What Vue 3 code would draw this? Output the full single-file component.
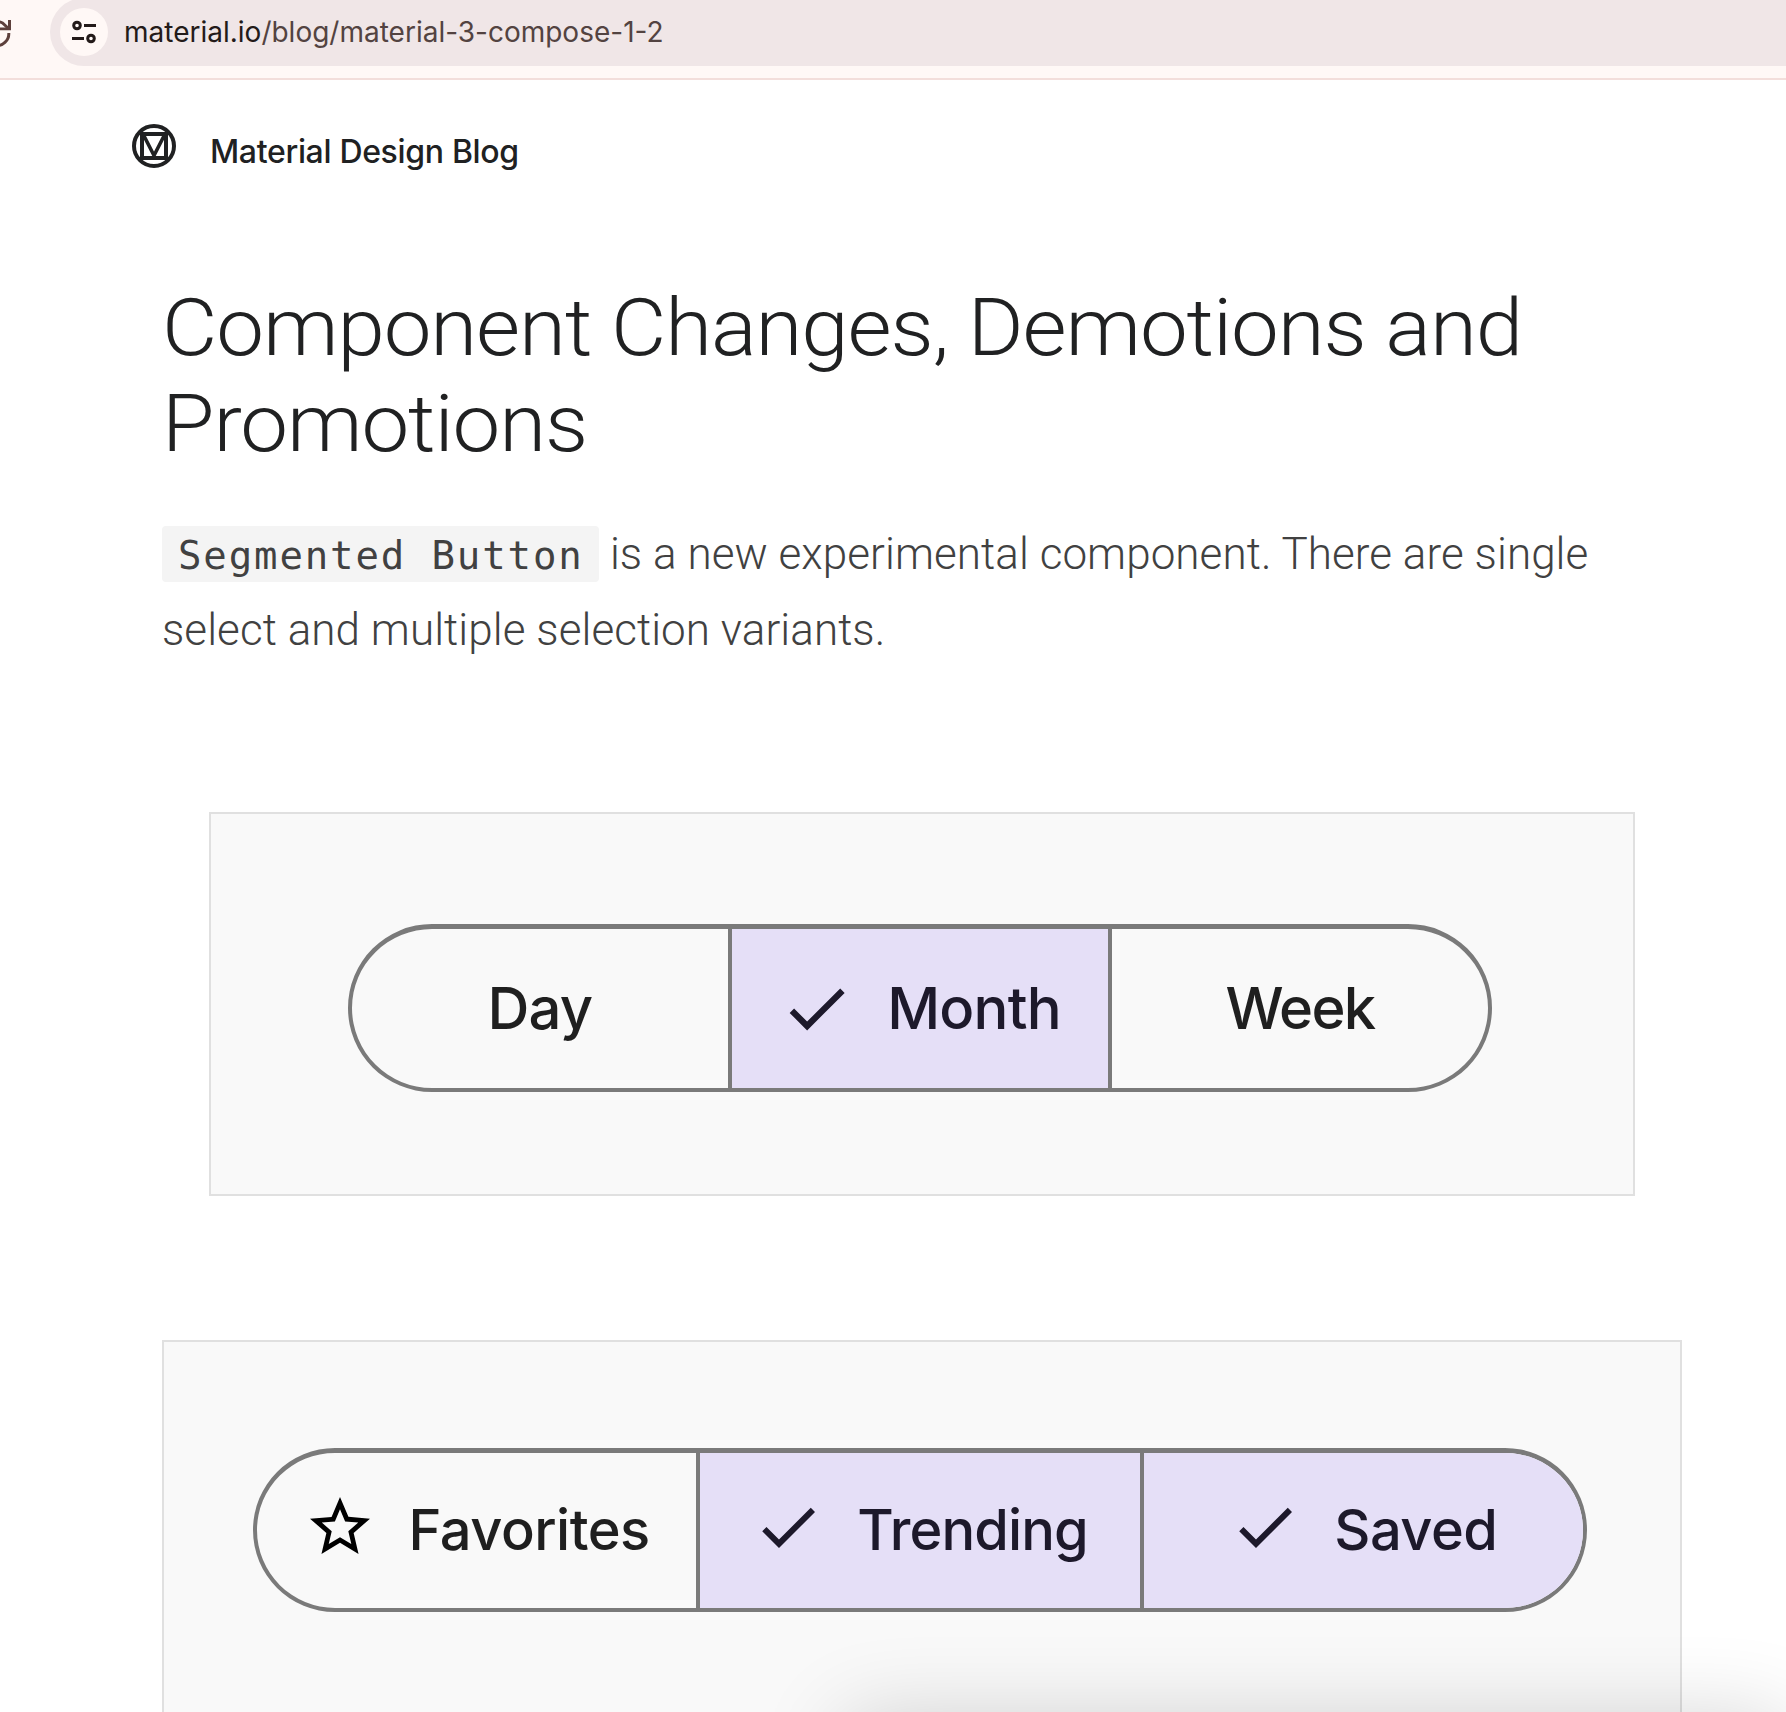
<template>
  <div class="page">
    <div class="toolbar">
      <svg class="reload" width="32" height="32" viewBox="0 0 32 32">
        <path d="M29.8 17A12 12 0 1 1 23.5 7L29.5 12.5" fill="none" stroke="#5d403c" stroke-width="3" />
        <path d="M32 4V14.2H21V11.4H29V4Z" fill="#5d403c" />
      </svg>
      <div class="omnibox">
        <span class="site-info">
          <svg width="24" height="24" viewBox="0 0 24 24" fill="none" stroke="#231a19" stroke-width="3">
            <circle cx="5" cy="5.5" r="3.3" />
            <path d="M12 5.5H24M0 18.5H12" />
            <circle cx="19" cy="18.5" r="3.3" />
          </svg>
        </span>
        <span class="url"><span class="host">material.io</span>/blog/material-3-compose-1-2</span>
      </div>
    </div>

    <header class="site-header">
      <svg class="logo" width="44" height="44" viewBox="0 0 44 44" fill="none" stroke="#202122" stroke-width="4">
        <circle cx="22" cy="22" r="20" />
        <path d="M10 10H34V34H10Z" />
        <path d="M10.5 9L22 31.5L33.5 9" stroke-width="3.6" stroke-linejoin="bevel" />
      </svg>
      <span class="site-name">Material Design Blog</span>
    </header>

    <main class="article">
      <h1>Component Changes, Demotions and Promotions</h1>
      <p>
        <code>Segmented Button</code> is a new experimental component. There are single<br />
        select and multiple selection variants.
      </p>

      <div v-for="group in groups" :key="group.id" class="card" :class="group.id">
        <div class="segmented">
          <button
            v-for="item in group.items"
            :key="item.label"
            class="segment"
            :class="[item.label.toLowerCase(), { selected: item.selected }]"
            @click="toggle(group, item)"
          >
            <svg v-if="item.selected || item.icon" class="icon" viewBox="0 0 24 24">
              <path :d="item.selected ? icons.check : icons[item.icon]" />
            </svg>
            <span class="label">{{ item.label }}</span>
          </button>
        </div>
      </div>
    </main>

    <div class="overlay-shadow"></div>
  </div>
</template>

<script setup>
import { reactive } from 'vue';

const icons = {
  check: 'M9 16.17L4.83 12l-1.42 1.41L9 19 21 7l-1.41-1.41z',
  star: 'M22 9.24l-7.19-.62L12 2 9.19 8.63 2 9.24l5.46 4.73L5.82 21 12 17.27 18.18 21l-1.63-7.03L22 9.24zM12 15.4l-3.76 2.27 1-4.28-3.32-2.88 4.38-.38L12 6.1l1.71 4.04 4.38.38-3.32 2.88 1 4.28L12 15.4z',
};

const groups = reactive([
  {
    id: 'single',
    multiple: false,
    items: [
      { label: 'Day', selected: false },
      { label: 'Month', selected: true },
      { label: 'Week', selected: false },
    ],
  },
  {
    id: 'multi',
    multiple: true,
    items: [
      { label: 'Favorites', icon: 'star', selected: false },
      { label: 'Trending', selected: true },
      { label: 'Saved', selected: true },
    ],
  },
]);

function toggle(group, item) {
  if (group.multiple) {
    item.selected = !item.selected;
    return;
  }
  group.items.forEach(i => { i.selected = i === item; });
}
</script>

<style>
body {
  margin: 0;
  background: #fff;
}
</style>

<style scoped>
.page {
  position: relative;
  width: 100%;
  height: 1712px;
  overflow: hidden;
  font-family: Roboto, "Liberation Sans", sans-serif;
  color: #202122;
}
.toolbar {
  display: flex;
  box-sizing: border-box;
  height: 80px;
  background: #fff8f6;
  border-bottom: 2px solid #f3dedb;
}
.reload {
  flex: none;
  margin: 16px 39px 0 -21px;
}
.omnibox {
  flex: 1;
  display: flex;
  align-items: center;
  height: 68px;
  margin-top: -2px;
  padding-left: 10px;
  border-radius: 34px 0 0 34px;
  background: #f0e6e7;
}
.site-info {
  display: flex;
  align-items: center;
  justify-content: center;
  width: 48px;
  height: 48px;
  border-radius: 50%;
  background: #fff8f6;
}
.url {
  margin-left: 16px;
  font-family: Inter, sans-serif;
  font-size: 28px;
  line-height: 34px;
  color: #534341;
  white-space: nowrap;
}
.host {
  color: #231a19;
}
.site-header {
  display: flex;
  height: 136px;
  padding: 44px 0 0 132px;
  box-sizing: border-box;
}
.site-name {
  margin: 8px 0 0 34px;
  font-family: Inter, sans-serif;
  font-size: 32px;
  font-weight: 500;
  line-height: 40px;
  letter-spacing: -0.33px;
}
.article {
  padding: 64px 0 0 162px;
}
/* slightly extended letterforms for the headline */
h1 {
  width: 1430px;
  margin: 0;
  font-size: 80px;
  font-weight: 300;
  line-height: 96px;
  letter-spacing: -1px;
  transform: scaleX(1.065);
  transform-origin: left;
}
p {
  width: 1500px;
  margin: 44px 0 0;
  font-size: 44px;
  font-weight: 300;
  line-height: 76px;
  letter-spacing: 0.06px;
  color: #414141;
}
code {
  padding: 7px 15.5px 4px 16px;
  border-radius: 4px;
  background: #f4f4f4;
  font-family: "DejaVu Sans Mono", monospace;
  font-size: 39px;
  line-height: 1;
  letter-spacing: 1.87px;
}
.card {
  box-sizing: border-box;
  border: 2px solid #e0e0e0;
  background: #f9f9f9;
}
.single {
  width: 1426px;
  height: 384px;
  margin: 144px 0 0 47px;
  padding: 110px 0 0 137px;
}
.multi {
  width: 1520px;
  height: 460px;
  margin-top: 144px;
  padding: 106px 0 0 89px;
}
.segmented {
  display: flex;
  box-sizing: border-box;
  overflow: hidden;
  border: 4px solid #7a7a7a;
  border-top-width: 5px;
  border-radius: 84px;
}
.single .segmented {
  width: 1144px;
  height: 168px;
}
.multi .segmented {
  width: 1334px;
  height: 164px;
}
.segment {
  flex: 1;
  display: flex;
  align-items: center;
  justify-content: center;
  padding: 0;
  border: 0;
  background: none;
  color: #1f1f1f;
  font-family: Inter, sans-serif;
  font-size: 58px;
  font-weight: 500;
  letter-spacing: -0.8px;
}
.segment + .segment {
  border-left: 4px solid #7a7a7a;
}
.segment.week {
  letter-spacing: -1.7px;
}
.multi .segment {
  font-size: 56px;
  letter-spacing: -0.5px;
}
.multi .segment.trending {
  letter-spacing: -0.9px;
}
.selected {
  background: #e5dff7;
  color: #1d192b;
}
.icon {
  flex: none;
  width: 75px;
  height: 75px;
  margin-right: 33px;
  fill: currentColor;
}
.multi .icon {
  width: 72px;
  height: 72px;
  margin-bottom: 8px;
}
.label {
  flex: none;
  margin-bottom: 1px;
}
.favorites .icon {
  fill: #000;
}
/* shadow of a floating panel that sits below the viewport */
.overlay-shadow {
  position: absolute;
  top: 1722px;
  left: 846px;
  width: 940px;
  height: 200px;
  box-shadow: 0 0 88px rgba(0, 0, 0, 0.19);
}
</style>
